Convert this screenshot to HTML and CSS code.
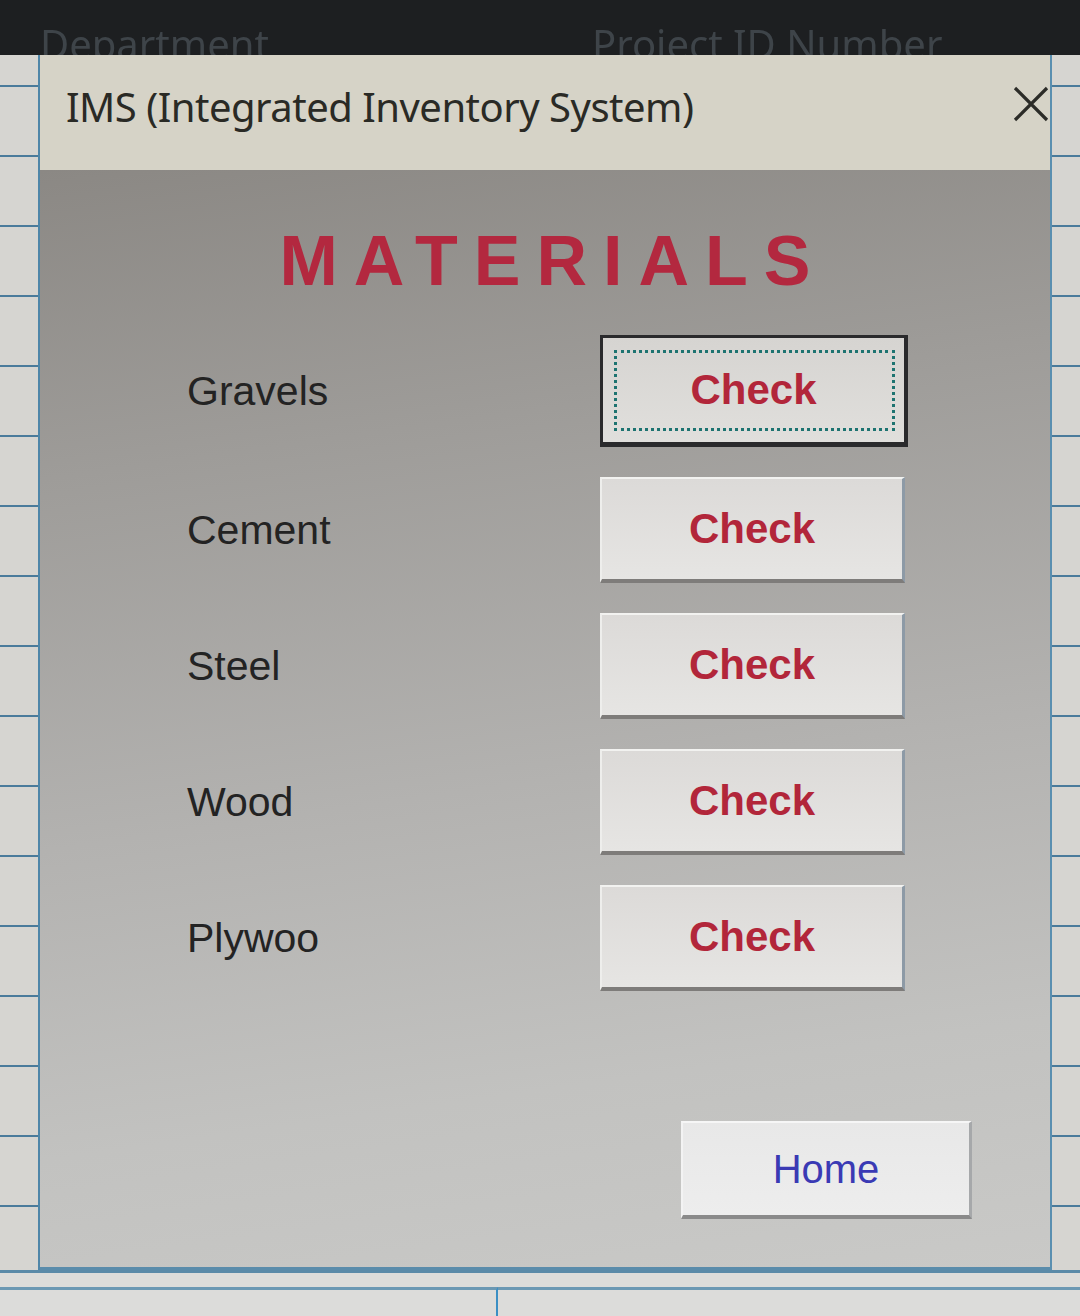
FILE: index.html
```html
<!DOCTYPE html>
<html lang="en">
<head>
    <meta charset="UTF-8">
    <meta name="viewport" content="width=device-width, initial-scale=1.0">
    <title>IMS - Materials</title>
    <link rel="stylesheet" href="styles.css">
</head>
<body>
    <div class="sheet-header">
        <span class="col-title col-dept">Department</span>
        <span class="col-title col-project">Project ID Number</span>
    </div>

    <div class="dialog">
        <div class="title-bar">
            <span class="title-text">IMS (Integrated Inventory System)</span>
            <button class="close-btn" aria-label="Close">
                <svg width="38" height="36" viewBox="0 0 38 36">
                    <path d="M3 2 L35 34 M35 2 L3 34" stroke="#2c2c28" stroke-width="3.2" fill="none"/>
                </svg>
            </button>
        </div>

        <div class="dialog-body">
            <div class="heading">MATERIALS</div>

            <div class="material-list">
                <div class="material-row">
                    <span class="material-label">Gravels</span>
                    <button class="check-btn focused"><span>Check</span></button>
                </div>
                <div class="material-row">
                    <span class="material-label">Cement</span>
                    <button class="check-btn"><span>Check</span></button>
                </div>
                <div class="material-row">
                    <span class="material-label">Steel</span>
                    <button class="check-btn"><span>Check</span></button>
                </div>
                <div class="material-row">
                    <span class="material-label">Wood</span>
                    <button class="check-btn"><span>Check</span></button>
                </div>
                <div class="material-row">
                    <span class="material-label">Plywoo</span>
                    <button class="check-btn"><span>Check</span></button>
                </div>
            </div>

            <div class="footer">
                <button class="home-btn">Home</button>
            </div>
        </div>
    </div>

    <div class="sheet-bottom">
        <div class="cell"></div>
        <div class="cell"></div>
    </div>
</body>
</html>
```

FILE: styles.css
```css
* {
    margin: 0;
    padding: 0;
    box-sizing: border-box;
}

body {
    width: 1080px;
    height: 1316px;
    overflow: hidden;
    font-family: 'Liberation Sans', Arial, sans-serif;
    background-color: #d6d5d1;
    background-image: repeating-linear-gradient(to bottom, transparent 0, transparent 68px, #4a7b9b 68px, #4a7b9b 70px);
    background-position: 0 17px;
}

/* Spreadsheet behind the form */
.sheet-header {
    height: 55px;
    background: #1d1f21;
    overflow: hidden;
    display: flex;
    padding-top: 24px;
    line-height: 1;
}

.col-title {
    font-family: 'Noto Sans', sans-serif;
    font-size: 40px;
    color: #3e4449;
    filter: blur(0.6px);
}

.col-dept {
    margin-left: 40px;
    width: 552px;
}

.sheet-bottom {
    display: flex;
    height: 60px;
    border-top: 3px solid #5a8aa8;
    background: #dcdcda;
}

.sheet-bottom .cell {
    width: 498px;
    border-right: 2px solid #3b8fc4;
    border-top: 3px solid #6b98b3;
    margin-top: 14px;
}

.sheet-bottom .cell + .cell {
    flex: 1;
    border-right: none;
}

/* Dialog */
.dialog {
    margin-left: 38px;
    width: 1014px;
    border-left: 2px solid #4f86a8;
    border-right: 2px solid #5a8fb0;
}

.title-bar {
    height: 115px;
    background: #d6d3c7;
    display: flex;
    align-items: center;
    justify-content: space-between;
    padding: 0 0 12px 26px;
}

.title-text {
    font-family: 'Noto Sans', sans-serif;
    font-size: 40px;
    letter-spacing: -0.5px;
    color: #2a2a25;
}

.close-btn {
    background: none;
    border: none;
    display: flex;
    margin-top: -6px;
}

.dialog-body {
    height: 1100px;
    background: linear-gradient(172deg, #8b8884 0%, #9e9c99 25%, #b3b2b0 55%, #c2c2c0 80%, #c9c9c7 100%);
    border-bottom: 3px solid #5a8cab;
    padding-top: 56px;
}

.heading {
    text-align: center;
    font-size: 70px;
    line-height: 1;
    font-weight: bold;
    letter-spacing: 16px;
    padding-left: 16px;
    color: #b3283f;
}

.material-list {
    margin-top: 39px;
    display: flex;
    flex-direction: column;
    gap: 30px;
}

.material-row {
    display: flex;
    align-items: center;
    padding-left: 147px;
}

.material-label {
    width: 413px;
    font-size: 41px;
    color: #232323;
}

.check-btn {
    position: relative;
    width: 305px;
    height: 106px;
    background: linear-gradient(to bottom, #dcdad8, #e6e5e3);
    border: none;
    border-top: 2px solid #f2f2f0;
    border-left: 2px solid #eeeeec;
    border-right: 3px solid #8d9aa6;
    border-bottom: 4px solid #7e7c7a;
    font-family: 'Liberation Sans', Arial, sans-serif;
    font-size: 42px;
    font-weight: bold;
    color: #b2263a;
}

.check-btn.focused {
    width: 308px;
    height: 112px;
    border: 3px solid #2a2a2c;
    border-right-width: 4px;
    border-bottom-width: 5px;
    background: linear-gradient(to bottom, #d6d4d1, #e0dfdc);
}

.check-btn.focused::before {
    content: '';
    position: absolute;
    top: 12px;
    left: 11px;
    right: 9px;
    bottom: 11px;
    border: 3px dotted #1d7370;
}

.footer {
    display: flex;
    justify-content: flex-end;
    padding-right: 78px;
    margin-top: 130px;
}

.home-btn {
    width: 291px;
    height: 98px;
    background: linear-gradient(to bottom, #e8e8e8, #ededed);
    border: none;
    border-top: 2px solid #f6f6f6;
    border-left: 2px solid #f3f3f3;
    border-right: 3px solid #a6a8aa;
    border-bottom: 4px solid #8a8a8a;
    font-family: 'Liberation Sans', Arial, sans-serif;
    font-size: 40px;
    color: #3a3ab4;
}
```
